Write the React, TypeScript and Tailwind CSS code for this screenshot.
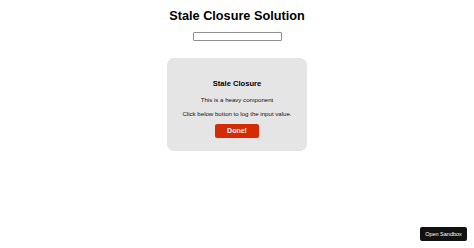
import React from "react";

export default function App() {
  return (
    <div className="relative w-[474px] h-[248px] bg-white overflow-hidden" style={{ fontFamily: '"Liberation Sans", Arial, sans-serif' }}>
      <div className="flex flex-col items-center">
        <h1 className="mt-[9px] text-[12.7px] leading-[14px] font-bold text-black">Stale Closure Solution</h1>
        <input className="mt-[9px] w-[89px] h-[9px] border border-[#8f8f8f] rounded-[1px] bg-white outline-none" />
        <div className="mt-[17px] w-[140px] h-[93px] bg-[#e5e5e5] rounded-[7px] flex flex-col items-center pt-[21px]">
          <h3 className="text-[7.6px] leading-[9px] font-bold text-black">Stale Closure</h3>
          <p className="mt-[7.5px] text-[6.1px] leading-[7px] text-[#111]">This is a heavy component</p>
          <p className="mt-[7px] text-[6.1px] leading-[7px] text-[#111]">Click below button to log the input value.</p>
          <button className="mt-[7.5px] w-[44px] h-[14px] rounded-[2px] bg-[#d42a06] text-white text-[7px] font-bold leading-[14px]">Done!</button>
        </div>
      </div>
      <div className="absolute right-[7px] bottom-[7px] w-[47px] h-[14px] bg-[#111] rounded-[2px] flex items-center justify-center text-white text-[5.5px]">
        Open Sandbox
      </div>
    </div>
  );
}
